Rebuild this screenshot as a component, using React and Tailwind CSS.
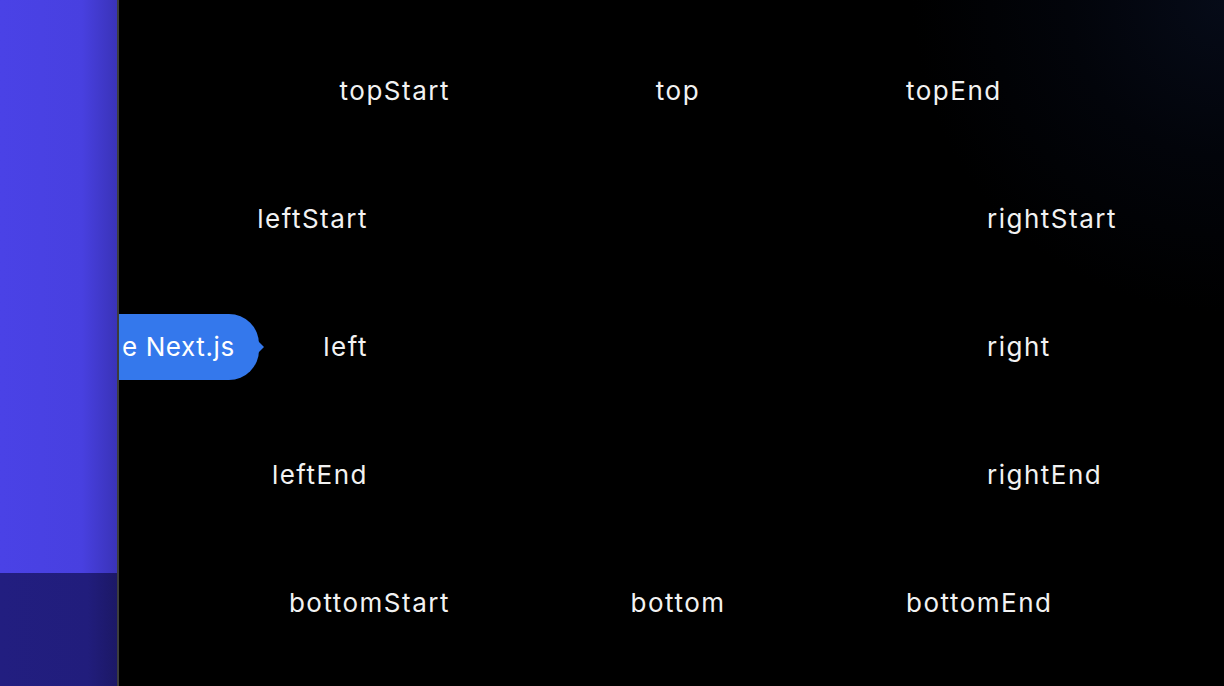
import React from "react";

const Label = ({ children }) => (
  <span className="text-[26px] leading-none tracking-[1.5px] text-[#f2f2f2]">{children}</span>
);

const Row = ({ left, mid, right, wide }) => {
  if (wide) {
    return (
      <div className="flex h-[128px] items-center">
        <div className="w-[331px] text-right">
          <Label>{left}</Label>
        </div>
        <div className="w-[456px] text-center">
          <Label>{mid}</Label>
        </div>
        <div className="flex-1 text-left">
          <Label>{right}</Label>
        </div>
      </div>
    );
  }
  return (
    <div className="flex h-[128px] items-center">
      <div className="w-[249px] text-right">
        <Label>{left}</Label>
      </div>
      <div className="w-[619px]"></div>
      <div className="flex-1 text-left">
        <Label>{right}</Label>
      </div>
    </div>
  );
};

export default function App() {
  return (
    <div
      className="flex h-[686px] w-[1224px] overflow-hidden bg-black"
      style={{ fontFamily: "Inter, 'Noto Sans', sans-serif" }}
    >
      {/* side panel */}
      <div className="relative z-10 flex w-[117px] shrink-0 flex-col">
        <div className="h-[573px] bg-[linear-gradient(90deg,#4a42e6_0%,#4840e0_70%,#3a33b8_100%)]"></div>
        <div className="flex-1 bg-[linear-gradient(90deg,#221e80_0%,#211d7c_75%,#1c1866_100%)]"></div>
      </div>
      <div className="z-10 w-[2px] shrink-0 bg-[#3c3c3c]"></div>

      {/* main */}
      <div className="relative flex-1 overflow-hidden bg-[radial-gradient(circle_at_100%_0%,#060b18_0%,#02040a_12%,#000000_24%)]">
        <div className="flex flex-col pt-[28px]">
          <Row wide left="topStart" mid="top" right="topEnd" />
          <Row left="leftStart" right="rightStart" />
          <Row left="left" right="right" />
          <Row left="leftEnd" right="rightEnd" />
          <Row wide left="bottomStart" mid="bottom" right="bottomEnd" />
        </div>

        {/* tooltip */}
        <div className="absolute left-[-40px] top-[314px] flex h-[66px] items-center">
          <div className="flex h-[66px] items-center rounded-r-[30px] bg-[#3478ec] pl-[43px] pr-[24px]">
            <span className="text-[26px] leading-none tracking-[0.6px] text-white">e Next.js</span>
          </div>
          <div className="ml-[-1px] h-0 w-0 border-y-[6px] border-l-[6px] border-y-transparent border-l-[#3478ec]"></div>
        </div>
      </div>
    </div>
  );
}
